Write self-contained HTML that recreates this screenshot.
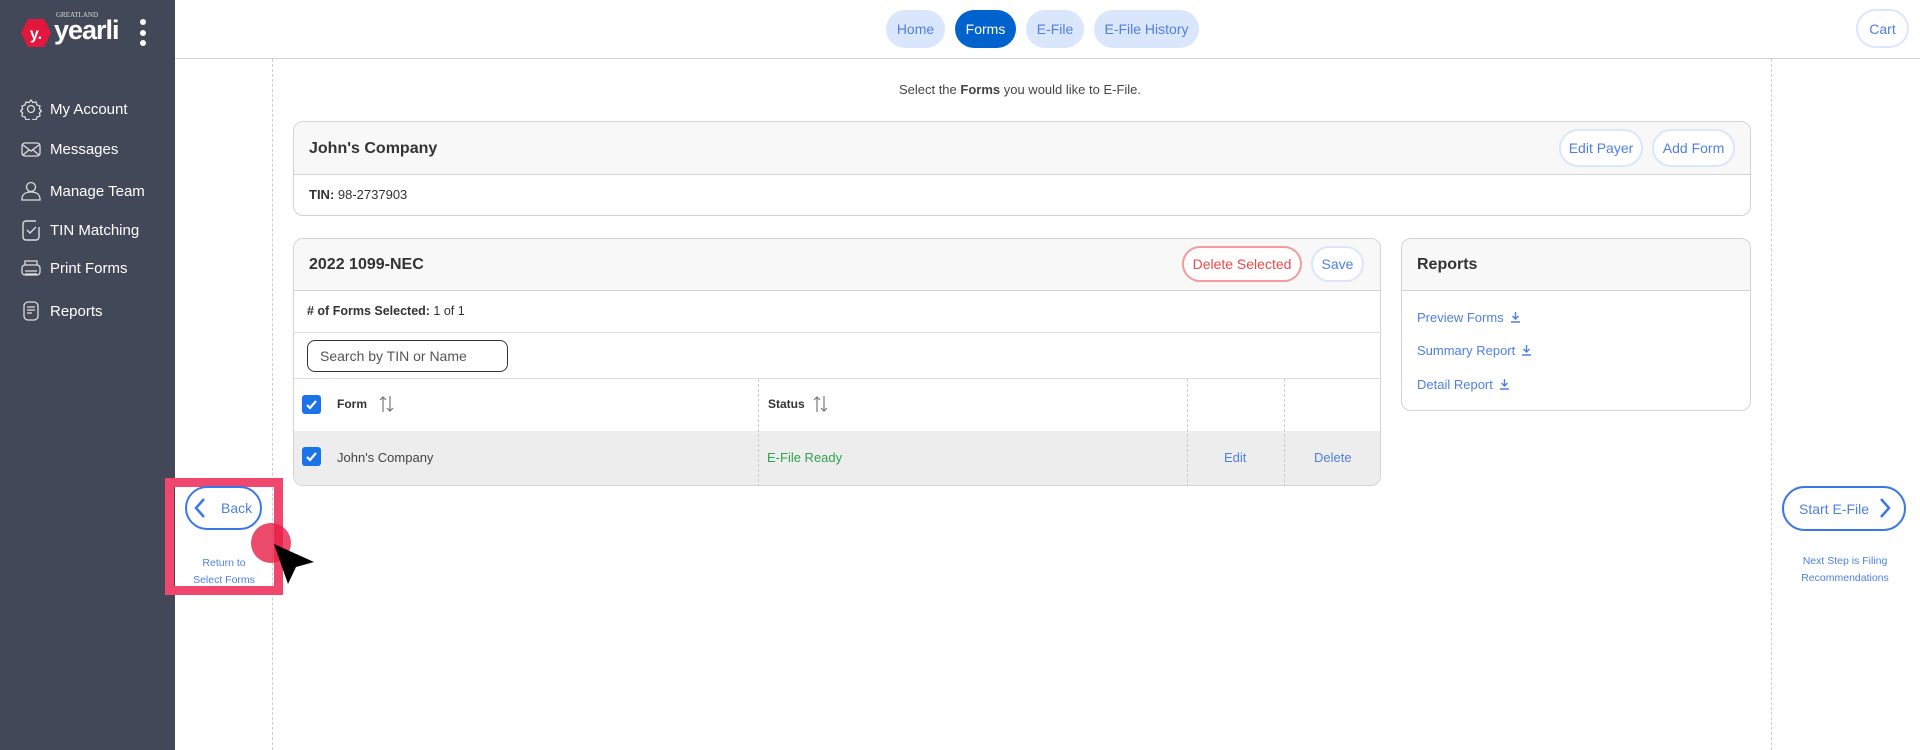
<!DOCTYPE html>
<html><head><meta charset="utf-8">
<style>
*{box-sizing:border-box;margin:0;padding:0}
body{width:1920px;height:750px;overflow:hidden;background:#fff;font-family:"Liberation Sans",Arial,sans-serif;position:relative;color:#333}
.a{position:absolute}
.side{left:0;top:0;width:175px;height:750px;background:#434859}
.nav{left:34px;color:#fff;font-size:15px;display:flex;align-items:center}
.nav svg{position:absolute;left:-14px;width:22px;height:22px}
.nav span{position:absolute;left:16px;white-space:nowrap}
.pill{top:10px;height:38px;border-radius:19px;background:#dae6fb;color:#4f7fe0;font-size:14px;display:flex;align-items:center;justify-content:center}
.card{border:1px solid #d3d3d3;border-radius:10px;overflow:hidden;background:#fff}
.hd{background:#f8f8f8;border-bottom:1px solid #d3d3d3}
.obtn{border:2px solid #dae6fb;border-radius:20px;color:#4f7fe0;font-size:14px;display:flex;align-items:center;justify-content:center;background:#fff}
.cb{width:19px;height:19px;background:#1a73e8;border-radius:3px}
.lnk{color:#4f7fe0;font-size:13px}
.dl{display:inline-block;vertical-align:-1px;margin-left:6px}
</style></head><body>
<div class="a side"></div>
<!-- logo -->
<svg class="a" style="left:20px;top:18px" width="32" height="30" viewBox="0 0 32 30"><polygon points="8,1 24,1 31,15 24,29 8,29 1,15" fill="#e3173e"/><text x="16" y="21" font-family="Liberation Sans" font-weight="bold" font-size="16" fill="#fff" text-anchor="middle">y.</text></svg>
<div class="a" style="left:56px;top:11px;font-family:'Liberation Serif',serif;font-size:7px;color:#ddd">GREATLAND</div>
<div class="a" style="left:54px;top:15px;font-size:27px;font-weight:bold;color:#fff;letter-spacing:-1px">yearli</div>
<div class="a" style="left:140px;top:19px;width:6px;height:6px;border-radius:3px;background:#fff"></div>
<div class="a" style="left:140px;top:30px;width:6px;height:6px;border-radius:3px;background:#fff"></div>
<div class="a" style="left:140px;top:40px;width:6px;height:6px;border-radius:3px;background:#fff"></div>

<div class="a nav" style="top:109px"><svg viewBox="0 0 22 22" fill="none" stroke="#ddd" stroke-width="1.3"><circle cx="11" cy="11" r="3.5"/><path d="M11 2l2 2.5 3-.5 1 3 3 1-.6 3 2 2-2 2 .6 3-3 1-1 3-3-.5-2 2.5-2-2.5-3 .5-1-3-3-1 .6-3-2-2 2-2-.6-3 3-1 1-3 3 .5z"/></svg><span>My Account</span></div>
<div class="a nav" style="top:149px"><svg viewBox="0 0 22 22" fill="none" stroke="#ddd" stroke-width="1.3"><rect x="2" y="5" width="18" height="13" rx="3"/><path d="M3 7l8 6 8-6M3 17l6-5M19 17l-6-5"/></svg><span>Messages</span></div>
<div class="a nav" style="top:191px"><svg viewBox="0 0 22 22" fill="none" stroke="#ddd" stroke-width="1.3"><circle cx="11" cy="7" r="4.5"/><path d="M2 19c0-5 4-7 9-7s9 2 9 7v1H2z"/></svg><span>Manage Team</span></div>
<div class="a nav" style="top:230px"><svg viewBox="0 0 22 22" fill="none" stroke="#ddd" stroke-width="1.4"><path d="M16 2H6a3 3 0 0 0-3 3v13a3 3 0 0 0 3 3h10a3 3 0 0 0 3-3V8"/><path d="M7 11l3 3 6-6"/></svg><span>TIN Matching</span></div>
<div class="a nav" style="top:268px"><svg viewBox="0 0 22 22" fill="none" stroke="#ddd" stroke-width="1.3"><path d="M5 8V4h12v4"/><rect x="2" y="8" width="18" height="10" rx="3"/><path d="M5 14h12M5 17h12"/></svg><span>Print Forms</span></div>
<div class="a nav" style="top:311px"><svg viewBox="0 0 22 22" fill="none" stroke="#ddd" stroke-width="1.3"><rect x="4" y="2" width="14" height="18" rx="4"/><path d="M7 7h8M7 10h8M7 13h5"/></svg><span>Reports</span></div>

<!-- top bar -->
<div class="a" style="left:175px;top:58px;width:1745px;height:1px;background:#d0d0d0"></div>
<div class="a pill" style="left:886px;width:59px">Home</div>
<div class="a pill" style="left:955px;width:61px;background:#0062cc;color:#fff">Forms</div>
<div class="a pill" style="left:1026px;width:58px">E-File</div>
<div class="a pill" style="left:1094px;width:105px">E-File History</div>
<div class="a obtn" style="left:1856px;top:9px;width:53px;height:39px">Cart</div>

<div class="a" style="left:272px;top:59px;height:691px;border-left:1px dashed #ccc"></div>
<div class="a" style="left:1771px;top:59px;height:691px;border-left:1px dashed #ccc"></div>

<div class="a" style="left:0;width:2040px;top:82px;text-align:center;font-size:13px;color:#444">Select the <b>Forms</b> you would like to E-File.</div>

<!-- card 1 -->
<div class="a card" style="left:293px;top:121px;width:1458px;height:95px">
 <div class="hd" style="height:53px"></div>
 <div class="a" style="left:15px;top:18px;font-size:16px;font-weight:bold">John's Company</div>
 <div class="a" style="left:15px;top:65px;font-size:13px"><b>TIN:</b> 98-2737903</div>
</div>
<div class="a obtn" style="left:1559px;top:129px;width:84px;height:38px">Edit Payer</div>
<div class="a obtn" style="left:1652px;top:129px;width:83px;height:38px">Add Form</div>

<!-- card 2 -->
<div class="a card" style="left:293px;top:238px;width:1088px;height:248px">
 <div class="hd" style="height:52px"></div>
 <div class="a" style="left:15px;top:17px;font-size:16px;font-weight:bold">2022 1099-NEC</div>
 <div class="a" style="left:13px;top:65px;font-size:12.5px"><b>#&nbsp;of Forms Selected:</b> 1 of 1</div>
 <div class="a" style="left:0;top:93px;width:100%;height:1px;background:#ddd"></div>
 <div class="a" style="left:13px;top:101px;width:201px;height:32px;border:1px solid #333;border-radius:8px;font-size:14px;color:#555;padding:7px 12px">Search by TIN or Name</div>
 <div class="a" style="left:0;top:139px;width:100%;height:1px;background:#ddd"></div>
 <div class="a" style="left:0;top:192px;width:100%;height:56px;background:#ededed"></div>
 <div class="a" style="left:464px;top:140px;height:108px;border-left:1px dashed #ccc"></div>
 <div class="a" style="left:893px;top:140px;height:108px;border-left:1px dashed #ccc"></div>
 <div class="a" style="left:990px;top:140px;height:108px;border-left:1px dashed #ccc"></div>
 <div class="a cb" style="left:8px;top:156px"><svg width="19" height="19"><path d="M5 10l3 3 6-7" stroke="#fff" stroke-width="2.2" fill="none"/></svg></div>
 <div class="a cb" style="left:8px;top:208px"><svg width="19" height="19"><path d="M5 10l3 3 6-7" stroke="#fff" stroke-width="2.2" fill="none"/></svg></div>
 <div class="a" style="left:43px;top:158px;font-size:12px;font-weight:bold">Form</div>
 <svg class="a" style="left:84px;top:156px" width="18" height="18" viewBox="0 0 18 18" stroke="#777" stroke-width="1.2" fill="none"><path d="M5 17V2M2 5l3-3 3 3M12 1v15M9 13l3 3 3-3"/></svg>
 <div class="a" style="left:474px;top:158px;font-size:12px;font-weight:bold">Status</div>
 <svg class="a" style="left:518px;top:156px" width="18" height="18" viewBox="0 0 18 18" stroke="#777" stroke-width="1.2" fill="none"><path d="M5 17V2M2 5l3-3 3 3M12 1v15M9 13l3 3 3-3"/></svg>
 <div class="a" style="left:43px;top:211px;font-size:13px;color:#444">John's Company</div>
 <div class="a" style="left:473px;top:211px;font-size:13px;color:#2ea44f">E-File Ready</div>
 <div class="a lnk" style="left:930px;top:211px">Edit</div>
 <div class="a lnk" style="left:1020px;top:211px">Delete</div>
</div>
<div class="a" style="left:293px;top:332px;width:1088px;height:1px;background:#ddd"></div>
<div class="a obtn" style="left:1182px;top:246px;width:120px;height:36px;border-color:#f59a9a;color:#e84a4a">Delete Selected</div>
<div class="a obtn" style="left:1311px;top:246px;width:53px;height:36px">Save</div>

<!-- reports -->
<div class="a card" style="left:1401px;top:238px;width:350px;height:173px">
 <div class="hd" style="height:52px"></div>
 <div class="a" style="left:15px;top:17px;font-size:16px;font-weight:bold">Reports</div>
 <div class="a lnk" style="left:15px;top:71px">Preview Forms<svg class="dl" width="11" height="12" viewBox="0 0 11 12" stroke="#4f7fe0" stroke-width="1.4" fill="none"><path d="M5.5 1v7M2.5 5l3 3 3-3M1 11h9"/></svg></div>
 <div class="a lnk" style="left:15px;top:104px">Summary Report<svg class="dl" width="11" height="12" viewBox="0 0 11 12" stroke="#4f7fe0" stroke-width="1.4" fill="none"><path d="M5.5 1v7M2.5 5l3 3 3-3M1 11h9"/></svg></div>
 <div class="a lnk" style="left:15px;top:138px">Detail Report<svg class="dl" width="11" height="12" viewBox="0 0 11 12" stroke="#4f7fe0" stroke-width="1.4" fill="none"><path d="M5.5 1v7M2.5 5l3 3 3-3M1 11h9"/></svg></div>
</div>

<!-- back -->
<div class="a" style="left:165px;top:478px;width:118px;height:117px;border:9px solid #f0476f"></div>
<div class="a" style="left:185px;top:486px;width:77px;height:44px;border:2px solid #3b78e7;border-radius:22px;color:#4f7fe0;font-size:14px;padding:12px 0 0 34px">Back</div>
<svg class="a" style="left:193px;top:497px" width="14" height="22" viewBox="0 0 14 22"><path d="M11 2L3 11l8 9" stroke="#3b78e7" stroke-width="2.5" fill="none"/></svg>
<div class="a" style="left:174px;top:555px;width:100px;text-align:center;font-size:10.5px;line-height:17px;color:#4f7fe0">Return to<br>Select Forms</div>
<div class="a" style="left:251px;top:523px;width:40px;height:40px;border-radius:20px;background:rgba(233,30,70,.8)"></div>
<svg class="a" style="left:272px;top:542px" width="46" height="46" viewBox="0 0 46 46"><path d="M2 2L42 20 24 25 16 42z" fill="#000"/></svg>

<!-- start -->
<div class="a" style="left:1782px;top:486px;width:124px;height:45px;border:2px solid #3b78e7;border-radius:23px;color:#4f7fe0;font-size:14px;padding:13px 0 0 15px">Start E-File</div>
<svg class="a" style="left:1878px;top:497px" width="14" height="22" viewBox="0 0 14 22"><path d="M3 2l8 9-8 9" stroke="#3b78e7" stroke-width="2.5" fill="none"/></svg>
<div class="a" style="left:1778px;top:553px;width:134px;text-align:center;font-size:10.5px;line-height:17px;color:#4f7fe0">Next Step is Filing<br>Recommendations</div>
</body></html>
